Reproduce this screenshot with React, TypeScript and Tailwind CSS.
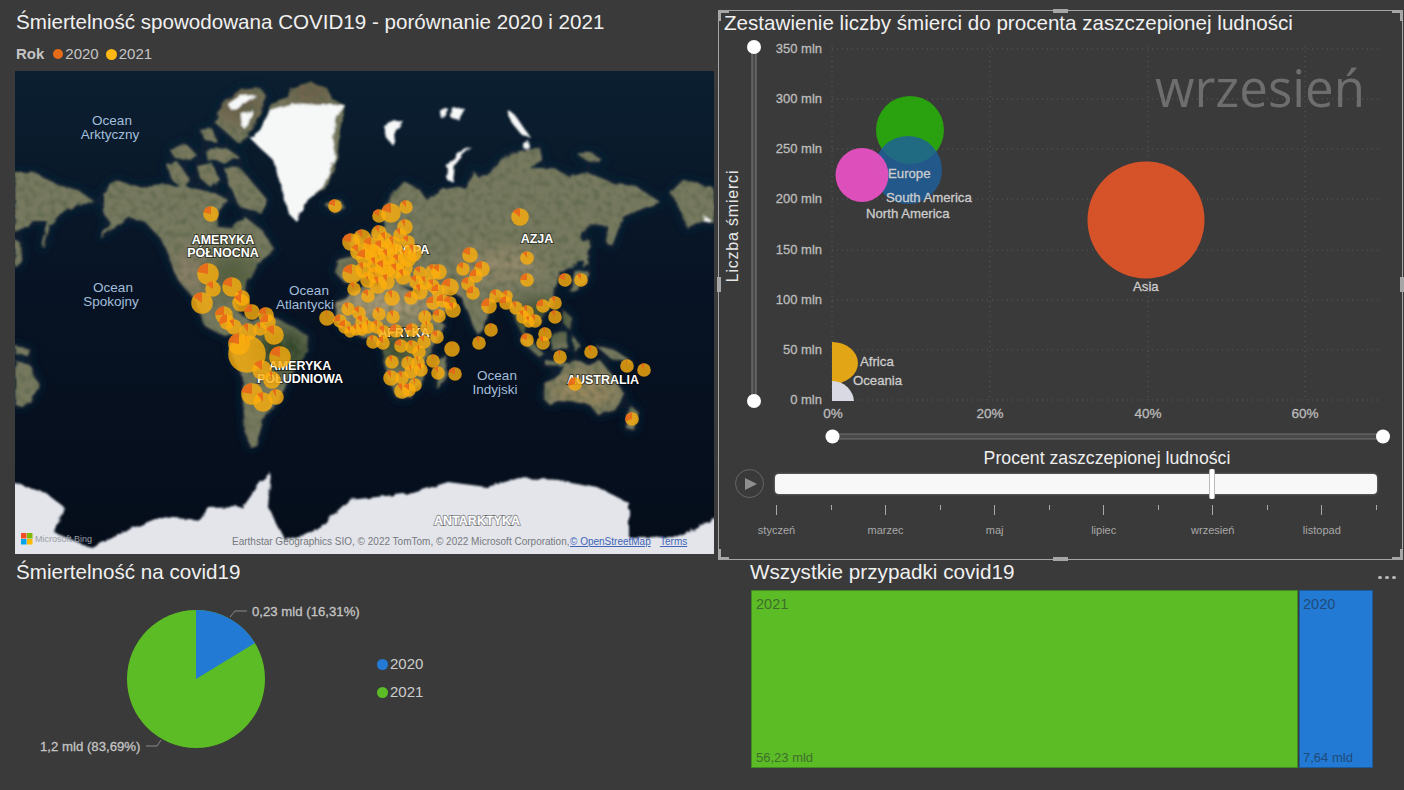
// Power BI style COVID dashboard
const land = [
  "15,173 35,173 58,185 78,190 95,202 78,205 62,212 50,225 45,245 42,247 48,222 35,222 15,232",
  "15,240 21,243 22,258 17,267 15,266",
  "103,193 115,180 138,188 162,185 188,187 215,193 228,200 217,213 218,227 232,228 245,217 262,230 275,250 262,260 248,280 245,297 235,302 238,312 250,320 240,332 225,336 205,326 195,300 178,280 162,240 145,222 128,217 115,227 100,238 110,222 103,213",
  "248,322 270,315 290,325 308,336 307,350 290,375 280,400 265,415 256,445 250,447 245,430 243,400 243,380 230,350 235,335",
  "337,303 350,293 363,287 397,283 423,297 430,313 445,325 437,340 427,360 423,380 410,397 397,398 387,377 383,347 367,337 347,333 337,323 335,313",
  "381,215 392,195 404,182 420,190 427,200 440,190 457,187 468,188 473,170 478,177 490,173 497,163 513,152 540,148 542,160 530,168 553,168 570,177 587,172 613,183 637,187 660,202 647,207 627,215 623,217 612,246 606,243 608,226 590,224 580,237 587,247 583,260 560,273 555,290 553,305 545,315 540,325 532,318 525,332 535,345 528,345 515,320 510,305 498,297 490,303 484,325 478,335 470,318 462,298 450,290 445,298 450,305 440,320 425,305 418,290 395,283 380,285 372,272 360,280 345,283 335,272 340,258 352,255 362,245 375,230 385,225",
  "350,240 358,232 365,245 362,258 352,258",
  "325,205 340,200 345,208 335,213",
  "583,243 590,240 588,262 583,268",
  "575,270 590,272 585,285 570,292",
  "578,155 590,152 602,160 590,162",
  "525,335 545,355 540,358 520,340",
  "550,335 565,330 568,348 552,350",
  "545,360 575,364 575,368 545,365",
  "572,335 580,345 575,352",
  "595,345 615,350 632,362 610,358",
  "563,310 572,318 570,330 562,322",
  "438,360 447,355 445,380 436,388",
  "545,385 560,372 575,360 590,365 600,360 612,375 625,395 615,410 598,415 590,405 565,400 550,405 543,398",
  "15,360 30,365 39,385 32,400 22,407 15,405",
  "15,345 30,350 28,356 15,354",
  "630,405 638,412 634,430 626,428",
  "670,193 683,180 713,188 720,190 720,223 697,223 687,228 677,203",
  "222,103 240,90 260,88 267,97 260,113 247,137 238,143 227,133 215,123",
  "223,167 240,168 253,183 267,200 260,213 240,207 230,187",
  "170,150 185,143 197,155 190,160 175,158",
  "200,130 212,128 217,142 205,140",
  "205,150 225,147 240,158 225,162 207,160",
  "167,165 178,162 190,180 185,190 172,180",
  "197,166 212,163 220,180 210,187 200,178",
];

// brown rock round the Greenland ice
const rock =
  "270,103 288,97 290,88 310,82 327,88 333,100 345,105 340,130 337,160 326,190 300,200 280,170 265,130";

const ice = [
  "250,138 260,130 270,110 293,103 317,105 345,105 337,117 332,137 335,157 323,187 310,197 297,222 288,213 283,193 273,160 260,148",
  "228,104 240,96 256,95 242,105 231,110",
  "243,114 253,110 246,130 240,124",
  "447,180 448,167 457,153 472,147 463,155 455,165 453,182",
  "440,112 448,108 447,117 441,118",
  "452,106 466,110 460,120 451,118",
  "508,110 515,115 530,137 522,135 511,122",
  "523,143 529,141 530,148 524,149",
  "383,125 392,121 404,122 396,133 392,145 386,137",
  "704,216 712,221 706,223",
];

const antarctica =
  "0,483 15,483 46,493 64,507 55,533 92,548 128,530 160,517 202,520 207,508 243,507 262,480 271,472 268,507 285,540 317,530 349,500 413,493 448,482 487,487 519,478 560,480 597,487 629,503 629,537 675,537 712,520 730,512 730,580 0,580";

// [x, y, r, share of 2020]
const bubbles: number[][] = [
  [211, 214, 7, 0.22], [335, 206, 6, 0.2], [379, 216, 6, 0.18], [391, 213, 9, 0.2], [406, 207, 6, 0.12], [520, 217, 8, 0.15],
  [405, 227, 7, 0.08], [400, 235, 6, 0.1], [408, 242, 6, 0.15], [379, 233, 7, 0.1], [351, 242, 8, 0.22], [362, 238, 8, 0.1],
  [370, 252, 8, 0.1], [385, 240, 7, 0.1], [395, 252, 8, 0.1], [378, 256, 8, 0.1], [358, 252, 7, 0.15], [388, 268, 8, 0.1], [375, 275, 7, 0.1], [405, 268, 7, 0.1], [368, 280, 7, 0.1],
  [371, 245, 7, 0.2], [381, 248, 7, 0.15], [393, 245, 8, 0.08], [365, 258, 8, 0.2], [375, 265, 7, 0.1], [387, 257, 7, 0.1],
  [398, 262, 7, 0.12], [408, 258, 8, 0.12], [413, 253, 8, 0.08], [396, 271, 7, 0.12], [383, 268, 7, 0.15], [363, 270, 7, 0.1],
  [352, 274, 9, 0.2], [378, 285, 8, 0.08], [387, 282, 7, 0.1], [403, 277, 7, 0.1], [470, 255, 7, 0.2], [527, 258, 6, 0.1],
  [463, 269, 6, 0.15], [482, 269, 7, 0.2], [476, 276, 6, 0.25], [527, 280, 6, 0.25], [565, 280, 6, 0.2], [581, 280, 6, 0.1],
  [420, 273, 6, 0.15], [433, 272, 7, 0.1], [439, 272, 7, 0.15], [416, 282, 6, 0.15], [425, 283, 6, 0.1], [420, 292, 7, 0.1],
  [433, 286, 6, 0.12], [450, 287, 8, 0.2], [438, 291, 6, 0.25], [468, 284, 6, 0.2], [473, 293, 6, 0.25], [354, 289, 6, 0.1],
  [368, 296, 6, 0.15], [392, 298, 7, 0.1], [411, 298, 6, 0.2], [433, 303, 6, 0.25], [443, 301, 6, 0.25], [450, 303, 6, 0.2],
  [453, 310, 7, 0.1], [496, 296, 6, 0.15], [507, 296, 5, 0.15], [506, 303, 6, 0.25], [489, 306, 7, 0.25], [516, 308, 6, 0.1],
  [543, 306, 6, 0.25], [555, 303, 6, 0.1], [555, 317, 6, 0.1], [527, 312, 6, 0.1], [523, 317, 6, 0.1], [529, 322, 5, 0.1],
  [535, 321, 6, 0.1], [545, 334, 6, 0.05], [543, 343, 6, 0.1], [527, 340, 6, 0.2], [560, 357, 6, 0.05], [491, 330, 6, 0.05],
  [479, 343, 6, 0.08], [452, 349, 7, 0.02], [455, 374, 6, 0.2], [438, 373, 6, 0.1], [433, 361, 6, 0.03], [348, 309, 6, 0.1],
  [359, 313, 6, 0.15], [379, 314, 6, 0.1], [393, 317, 6, 0.1], [425, 317, 6, 0.05], [439, 316, 6, 0.2], [340, 321, 6, 0.25],
  [345, 327, 6, 0.2], [350, 332, 5, 0.1], [362, 322, 6, 0.15], [356, 330, 5, 0.1], [362, 330, 5, 0.1], [368, 327, 6, 0.05],
  [377, 327, 6, 0.1], [384, 332, 6, 0.15], [373, 342, 6, 0.1], [383, 343, 6, 0.15], [396, 331, 6, 0.25], [412, 330, 6, 0.25],
  [427, 328, 6, 0.05], [437, 337, 6, 0.15], [401, 346, 6, 0.2], [412, 347, 6, 0.1], [424, 342, 6, 0.1], [419, 352, 6, 0.05],
  [392, 362, 6, 0.1], [408, 363, 6, 0.05], [418, 363, 6, 0.05], [421, 370, 6, 0.1], [411, 372, 6, 0.05], [391, 378, 7, 0.1],
  [402, 378, 6, 0.1], [415, 385, 6, 0.05], [402, 391, 7, 0.1], [409, 390, 6, 0.15],
  [208, 274, 10, 0.22], [213, 289, 7, 0.15], [232, 287, 9, 0.2], [242, 298, 7, 0.1], [202, 303, 10, 0.15], [241, 303, 8, 0.15],
  [224, 315, 8, 0.25], [227, 322, 7, 0.3], [234, 327, 7, 0.1], [252, 312, 7, 0.25], [266, 315, 7, 0.2], [268, 322, 7, 0.25],
  [248, 332, 8, 0.1], [260, 329, 6, 0.1], [274, 335, 9, 0.15], [247, 354, 18, 0.02], [239, 344, 10, 0.22], [280, 357, 10, 0.2],
  [262, 370, 9, 0.15], [272, 380, 8, 0.05], [252, 394, 10, 0.22], [263, 402, 9, 0.1], [276, 397, 7, 0.08], [327, 318, 7, 0.03],
  [591, 352, 6, 0.08], [627, 366, 6, 0.03], [644, 370, 6, 0.08], [575, 384, 6, 0.3], [632, 419, 6, 0.3],
];

const slicePath = (x: number, y: number, r: number, f: number) => {
  const a = -f * 2 * Math.PI;
  const ex = (x + r * Math.sin(a)).toFixed(2);
  const ey = (y - r * Math.cos(a)).toFixed(2);
  return `M${x} ${y}L${x} ${y - r}A${r} ${r} 0 0 0 ${ex} ${ey}Z`;
};

const WorldMap = () => (
  <svg viewBox="15 71 699 483" className="block w-[699px] h-[483px]">
    <defs>
      <linearGradient id="sea" x1="0" y1="0" x2="0" y2="1">
        <stop offset="0" stopColor="#0b1f30" />
        <stop offset="0.45" stopColor="#071324" />
        <stop offset="1" stopColor="#050d1a" />
      </linearGradient>
      <clipPath id="landClip">
        {land.map((p) => (
          <polygon key={p} points={p} />
        ))}
        <polygon points={rock} />
      </clipPath>
      <filter id="rough" x="-5%" y="-5%" width="110%" height="110%">
        <feTurbulence type="fractalNoise" baseFrequency="0.1" numOctaves="3" seed="4" result="n" />
        <feDisplacementMap in="SourceGraphic" in2="n" scale="5" result="d" />
        <feGaussianBlur in="d" stdDeviation="1" />
      </filter>
      <filter id="texture" x="0" y="0" width="100%" height="100%">
        <feTurbulence type="fractalNoise" baseFrequency="0.16" numOctaves="4" seed="8" result="n" />
        <feColorMatrix in="n" type="matrix" values="0 0 0 0 0.1  0 0 0 0 0.13  0 0 0 0 0.07  2 0 0 0 -0.8" result="dark" />
        <feComposite in="dark" in2="SourceAlpha" operator="in" result="darkIn" />
        <feMerge>
          <feMergeNode in="SourceGraphic" />
          <feMergeNode in="darkIn" />
        </feMerge>
      </filter>
      <filter id="soft">
        <feGaussianBlur stdDeviation="9" />
      </filter>
      <filter id="shelf">
        <feGaussianBlur stdDeviation="5" />
      </filter>
    </defs>

    <rect x="15" y="71" width="699" height="483" fill="url(#sea)" />
    <g filter="url(#shelf)" fill="#0e2435" stroke="#0e2435" strokeWidth="6">
      {land.map((p) => (
        <polygon key={p} points={p} />
      ))}
    </g>

    <g filter="url(#rough)">
      <g clipPath="url(#landClip)">
        <g filter="url(#texture)">
          <rect x="15" y="71" width="699" height="483" fill="#787a60" />
          <g filter="url(#soft)">
            <ellipse cx="385" cy="305" rx="55" ry="16" fill="#a89a78" />
            <ellipse cx="440" cy="300" rx="20" ry="12" fill="#9c8e70" />
            <ellipse cx="500" cy="265" rx="42" ry="16" fill="#94896c" />
            <ellipse cx="395" cy="347" rx="28" ry="16" fill="#3a4a2c" />
            <ellipse cx="405" cy="385" rx="14" ry="10" fill="#6a6c4c" />
            <ellipse cx="280" cy="350" rx="30" ry="22" fill="#2f4228" />
            <ellipse cx="585" cy="390" rx="34" ry="18" fill="#98875f" />
            <ellipse cx="232" cy="275" rx="26" ry="22" fill="#56613f" />
            <ellipse cx="190" cy="270" rx="16" ry="24" fill="#8a7f68" />
            <ellipse cx="540" cy="320" rx="32" ry="20" fill="#37492d" />
            <ellipse cx="375" cy="262" rx="24" ry="16" fill="#5a633f" />
            <ellipse cx="310" cy="90" rx="30" ry="14" fill="#6e5e48" />
            <ellipse cx="240" cy="105" rx="25" ry="18" fill="#6e5e48" />
            <ellipse cx="215" cy="165" rx="40" ry="24" fill="#7d7a60" />
          </g>
        </g>
      </g>
      {ice.map((p) => (
        <polygon key={p} points={p} fill="#f6f7f7" />
      ))}
      <polygon points={antarctica} fill="#e3e5eb" />
    </g>

    <g className="font-['Liberation_Sans',Arial,sans-serif]">
      <g textAnchor="middle" className="text-[13.5px] fill-[#a3bfdc]">
        <text x="112" y="125">Ocean</text>
        <text x="110" y="139">Arktyczny</text>
        <text x="113" y="292">Ocean</text>
        <text x="111" y="306">Spokojny</text>
        <text x="309" y="295">Ocean</text>
        <text x="305" y="309">Atlantycki</text>
        <text x="497" y="380">Ocean</text>
        <text x="495" y="394">Indyjski</text>
      </g>
      <g textAnchor="middle" fontWeight="700" stroke="#00000080" strokeWidth="2" className="text-[12.5px] fill-white [paint-order:stroke]">
        <text x="223" y="244">AMERYKA</text>
        <text x="223" y="257">PÓŁNOCNA</text>
        <text x="403" y="254">EUROPA</text>
        <text x="537" y="243">AZJA</text>
        <text x="404" y="337">AFRYKA</text>
        <text x="300" y="370">AMERYKA</text>
        <text x="300" y="383">POŁUDNIOWA</text>
        <text x="603" y="384">AUSTRALIA</text>
      </g>
      <text x="477" y="525" textAnchor="middle" fontWeight="700" stroke="#00000059" strokeWidth="2" className="text-[12.5px] fill-white [paint-order:stroke]">
        ANTARKTYKA
      </text>
    </g>

    {bubbles.map(([x, y, r, f], i) => (
      <g key={i}>
        <circle cx={x} cy={y} r={r + 0.8} fill="#fbae0c" fillOpacity="0.8" />
        <path d={slicePath(x, y, r + 0.8, f)} fill="#e8601c" fillOpacity="0.8" />
      </g>
    ))}

    {/* logo and credits */}
    <rect x="21" y="533" width="5.5" height="5.5" fill="#f25022" />
    <rect x="27" y="533" width="5.5" height="5.5" fill="#7fba00" />
    <rect x="21" y="539" width="5.5" height="5.5" fill="#00a4ef" />
    <rect x="27" y="539" width="5.5" height="5.5" fill="#ffb900" />
    <g className="font-['Liberation_Sans',Arial,sans-serif]">
      <text x="35" y="542" className="text-[9px] fill-[#9a9ea4]">Microsoft Bing</text>
      <text x="232" y="545" className="text-[10px] fill-[#77797d]">
        Earthstar Geographics SIO, © 2022 TomTom, © 2022 Microsoft Corporation,
      </text>
      <text x="570" y="545" className="text-[10px] fill-[#3f66b8] underline">© OpenStreetMap</text>
      <text x="660" y="545" className="text-[10px] fill-[#3f66b8] underline">Terms</text>
    </g>
  </svg>
);

const grid = {
  xs: [832, 990, 1148, 1305],
  ys: [
    [49, "350 mln"],
    [99, "300 mln"],
    [149, "250 mln"],
    [199, "200 mln"],
    [250, "150 mln"],
    [300, "100 mln"],
    [350, "50 mln"],
    [400, "0 mln"],
  ] as [number, string][],
};

const Scatter = () => (
  <svg viewBox="719 36 683 432" className="block w-[683px] h-[432px]">
    <defs>
      <clipPath id="plotClip">
        <rect x="832" y="40" width="552" height="361" />
      </clipPath>
    </defs>

    <text x="1260" y="107" textAnchor="middle" className="text-[51px] fill-[#6e6e6e] font-['Open_Sans',sans-serif]">
      wrzesień
    </text>

    <g stroke="#5c5c5c" strokeWidth="1" strokeDasharray="1 4">
      {grid.xs.map((x) => (
        <line key={x} x1={x} x2={x} y1="46" y2="401" />
      ))}
      {grid.ys.map(([y]) => (
        <line key={y} x1="832" x2="1378" y1={y} y2={y} />
      ))}
    </g>

    <g clipPath="url(#plotClip)">
      <circle cx="910" cy="130" r="34" fill="#2aa10f" />
      <circle cx="908" cy="170" r="34" fill="#1f5f9c" fillOpacity="0.82" />
      <ellipse cx="862" cy="175" rx="26.5" ry="27" fill="#e24fbe" fillOpacity="0.97" />
      <circle cx="1146" cy="220" r="58.5" fill="#d6532a" />
      <ellipse cx="832" cy="363" rx="26" ry="21" fill="#e1a516" />
      <ellipse cx="832" cy="402" rx="22" ry="21" fill="#d9d9e3" />
    </g>

    <g className="font-['Liberation_Sans',Arial,sans-serif]">
      <g textAnchor="end" stroke="#bcbcbc" strokeWidth="0.3" className="text-[13px] fill-[#bcbcbc]">
        {grid.ys.map(([y, t]) => (
          <text key={t} x="822" y={y + 4}>{t}</text>
        ))}
      </g>
      <g textAnchor="middle" stroke="#bcbcbc" strokeWidth="0.3" className="text-[13.5px] fill-[#bcbcbc]">
        <text x="833" y="418">0%</text>
        <text x="990" y="418">20%</text>
        <text x="1148" y="418">40%</text>
        <text x="1305" y="418">60%</text>
      </g>
      <g stroke="#cccccc" strokeWidth="0.3" className="text-[13.2px] fill-[#cccccc]">
        <text x="888" y="178">Europe</text>
        <text x="886" y="202">South America</text>
        <text x="866" y="218">North America</text>
        <text x="1133" y="291">Asia</text>
        <text x="860" y="366">Africa</text>
        <text x="853" y="385">Oceania</text>
      </g>
      <text x="1107" y="464" textAnchor="middle" className="text-[17.7px] fill-[#eeeeee]">
        Procent zaszczepionej ludności
      </text>
      <text x="0" y="0" transform="translate(738 226) rotate(-90)" textAnchor="middle" className="text-[16px] tracking-[0.8px] fill-[#e6e6e6]">
        Liczba śmierci
      </text>
    </g>

    {/* zoom sliders */}
    <rect x="752" y="47" width="4" height="354" fill="#4a4a4a" stroke="#7e7e7e" strokeWidth="1" />
    <circle cx="754" cy="47" r="7" fill="#ffffff" />
    <circle cx="754" cy="401" r="7" fill="#ffffff" />
    <rect x="832" y="434" width="552" height="5" fill="#4a4a4a" stroke="#6e6e6e" strokeWidth="1" />
    <circle cx="832.5" cy="436.5" r="7" fill="#ffffff" />
    <circle cx="1383" cy="436.5" r="7" fill="#ffffff" />
  </svg>
);

const months = [
  "styczeń", "", "marzec", "", "maj", "", "lipiec", "", "wrzesień", "", "listopad", "",
];

const PlayAxis = () => (
  <div>
    <div className="flex items-center h-[31px] pl-[16px]">
      <div className="w-[29px] h-[29px] rounded-full border border-[#666666] flex items-center justify-center">
        <svg viewBox="0 0 12 12" className="w-[12px] h-[12px] ml-[2px]">
          <polygon points="0,0 12,6 0,12" fill="#8f8f8f" />
        </svg>
      </div>
      <div className="relative ml-[11px] w-[602px] h-[20px] rounded-[4px] bg-[#f8f8f8] shadow-[0_0_3px_rgba(255,255,255,0.35)]">
        <div className="absolute left-[434px] top-[-5px] w-[6px] h-[30px] rounded-[2px] bg-white border-x border-[#b8b8b8]" />
      </div>
    </div>
    <div className="flex justify-between ml-[57px] w-[601px] mt-[6px]">
      {months.map((m, i) => (
        <div key={i} className="w-px flex flex-col items-center">
          <div className={m ? "w-px h-[10px] bg-[#a8a8a8] shrink-0" : "w-px h-[5px] bg-[#a8a8a8] shrink-0"} />
          {m && <div className="mt-[9px] text-[11px] leading-[12px] text-[#a8a8a8] whitespace-nowrap">{m}</div>}
        </div>
      ))}
    </div>
  </div>
);

const Handle = ({ className }: { className: string }) => (
  <div className={`absolute bg-[#a6a6a6] ${className}`} />
);

const Pie = () => (
  <svg viewBox="16 584 361 190" className="block w-[361px] h-[190px] shrink-0">
    <circle cx="196" cy="679" r="69" fill="#5cbc26" />
    <path d="M196 679L196 610A69 69 0 0 1 255 643Z" fill="#227ad4" />
    <polyline points="230,617 235,611 247,611" fill="none" stroke="#8a8a8a" />
    <polyline points="146,746 157,746 161,740" fill="none" stroke="#8a8a8a" />
    <g stroke="#c4c4c4" strokeWidth="0.3" className="text-[13.2px] fill-[#c4c4c4]">
      <text x="252" y="615.5">0,23 mld (16,31%)</text>
      <text x="40" y="750.5">1,2 mld (83,69%)</text>
    </g>
  </svg>
);

const LegendItem = ({ color, label }: { color: string; label: string }) => (
  <div className="flex items-center gap-[2px] h-[20px]">
    <span className={`w-[11px] h-[11px] rounded-full ${color}`} />
    <span className="text-[15px] text-[#cdcdcd]">{label}</span>
  </div>
);

export default function App() {
  return (
    <div className="w-[1404px] h-[790px] overflow-hidden bg-[#3a3a3a] flex flex-col font-['Liberation_Sans',Arial,sans-serif]">
      <div className="flex h-[560px] shrink-0">
        {/* map */}
        <div className="w-[718px] pl-[15px] shrink-0">
          <h2 className="h-[44px] flex items-center text-[20.6px] text-[#f0f0f0] pl-px">
            Śmiertelność spowodowana COVID19 - porównanie 2020 i 2021
          </h2>
          <div className="h-[20px] flex items-center text-[15px] text-[#c4c4c4] pl-px mb-[7px]">
            <span className="font-bold mr-[9px]">Rok</span>
            <span className="w-[10px] h-[10px] rounded-full bg-[#e66c19] mr-[2px]" />
            <span className="mr-[7px]">2020</span>
            <span className="w-[11px] h-[11px] rounded-full bg-[#fdb813] mr-[2px]" />
            <span>2021</span>
          </div>
          <WorldMap />
        </div>

        {/* bubble chart, selected */}
        <div className="relative mt-[10px] w-[685px] h-[550px] border border-[#a6a6a6]">
          <h2 className="h-[25px] flex items-center pl-[5px] text-[20.6px] text-[#f0f0f0]">
            Zestawienie liczby śmierci do procenta zaszczepionej ludności
          </h2>
          <Scatter />
          <PlayAxis />
          <Handle className="left-[-1px] top-[-1px] w-[11px] h-[3px]" />
          <Handle className="left-[-1px] top-[-1px] w-[3px] h-[11px]" />
          <Handle className="right-[-1px] top-[-1px] w-[11px] h-[3px]" />
          <Handle className="right-[-1px] top-[-1px] w-[3px] h-[11px]" />
          <Handle className="left-[-1px] bottom-[-1px] w-[11px] h-[3px]" />
          <Handle className="left-[-1px] bottom-[-1px] w-[3px] h-[11px]" />
          <Handle className="right-[-1px] bottom-[-1px] w-[11px] h-[3px]" />
          <Handle className="right-[-1px] bottom-[-1px] w-[3px] h-[11px]" />
          <Handle className="left-[334px] top-[-2px] w-[15px] h-[4px]" />
          <Handle className="left-[334px] bottom-[-2px] w-[15px] h-[4px]" />
          <Handle className="left-[-2px] top-[266px] w-[4px] h-[15px]" />
          <Handle className="right-[-2px] top-[266px] w-[4px] h-[15px]" />
        </div>
      </div>

      <div className="flex flex-1">
        {/* pie */}
        <div className="w-[718px] pl-[16px] shrink-0">
          <h2 className="h-[24px] flex items-center text-[20.6px] text-[#f0f0f0]">Śmiertelność na covid19</h2>
          <div className="flex">
            <Pie />
            <div className="flex flex-col gap-[8px] mt-[70px]">
              <LegendItem color="bg-[#227ad4]" label="2020" />
              <LegendItem color="bg-[#5cbc26]" label="2021" />
            </div>
          </div>
        </div>

        {/* treemap */}
        <div className="flex-1 pl-[32px] pr-[8px]">
          <div className="h-[24px] flex items-center justify-between">
            <h2 className="text-[20.7px] text-[#f0f0f0]">Wszystkie przypadki covid19</h2>
            <div className="flex gap-[3px] mt-[10px]">
              <span className="w-[4px] h-[3px] rounded-full bg-[#b5b5b5]" />
              <span className="w-[4px] h-[3px] rounded-full bg-[#b5b5b5]" />
              <span className="w-[4px] h-[3px] rounded-full bg-[#b5b5b5]" />
            </div>
          </div>
          <div className="flex gap-[1px] mt-[6px] ml-px w-[622px] h-[178px]">
            <div className="w-[547px] border border-[#3f8a25] bg-[#5cbc26] text-[#3f6e2c] flex flex-col justify-between px-[4px] pt-[3px]">
              <span className="text-[14.5px]">2021</span>
              <span className="text-[13px]">56,23 mld</span>
            </div>
            <div className="flex-1 border border-[#1c5a9a] bg-[#227ad4] text-[#204a78] flex flex-col justify-between px-[3px] pt-[3px]">
              <span className="text-[14.5px]">2020</span>
              <span className="text-[13px]">7,64 mld</span>
            </div>
          </div>
        </div>
      </div>
    </div>
  );
}
